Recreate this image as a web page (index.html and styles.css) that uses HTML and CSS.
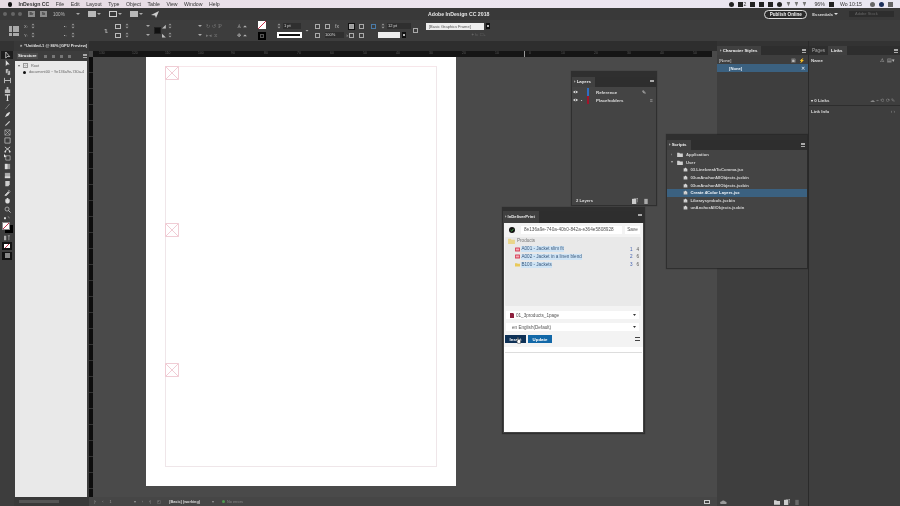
FILE: index.html
```html
<!DOCTYPE html>
<html lang="en">
<head>
<meta charset="utf-8">
<title>Adobe InDesign CC 2018</title>
<link rel="stylesheet" href="styles.css">
</head>
<body>
<svg class="defs" width="0" height="0" aria-hidden="true">
  <symbol id="eye" viewBox="0 0 8 6"><path d="M0 3Q4-1 8 3Q4 7 0 3Z" fill="#ddd"/><circle cx="4" cy="3" r="1.1" fill="#333"/></symbol>
  <symbol id="spin" viewBox="0 0 4 8"><path d="M0 3L2 .8L4 3ZM0 5L2 7.2L4 5Z" fill="#999"/></symbol>
  <symbol id="doc" viewBox="0 0 8 8"><path d="M1 2L3 2L4 0.6L7 3V7H1ZM3 5H5" fill="#ddd" stroke="#555" stroke-width=".4"/></symbol>
  <symbol id="folder" viewBox="0 0 8 7"><path d="M0 1H3L4 2H8V7H0Z" fill="#cfcfcf"/></symbol>
  <symbol id="trash" viewBox="0 0 6 7"><path d="M1 1H5V7H1Z" fill="#aaa"/></symbol>
  <symbol id="pageic" viewBox="0 0 7 7"><path d="M0 1H5V7H0Z" fill="#ccc"/><path d="M2 0H7V5" fill="none" stroke="#ddd" stroke-width=".8"/></symbol>
  <symbol id="prod" viewBox="0 0 6 5"><rect width="6" height="5" rx=".6" fill="#d8455c"/><path d="M1 1.3H5V3.6H1Z" fill="#f3a9b5"/></symbol>
  <symbol id="cloud" viewBox="0 0 8 5"><path d="M1 5A1.500 1.500 0 0 1 1.500 2A2.500 2.500 0 0 1 6 1.800A1.700 1.700 0 0 1 7 5Z" fill="#999"/></symbol>
</svg>
<div class="app">
  <div class="menubar">
    <span class="apple"></span>
    <b class="menu-app">InDesign CC</b>
    <span>File</span><span>Edit</span><span>Layout</span><span>Type</span><span>Object</span><span>Table</span><span>View</span><span>Window</span><span>Help</span>
    <div class="status">
      <i class="st r"></i><i class="st s"></i><em>2</em><i class="st s"></i><i class="st s"></i><i class="st s"></i><i class="st r"></i><i class="st t"></i><i class="st t"></i><i class="st t"></i>
      <span class="batt">96%</span><i class="st s"></i>
      <span class="clock">Wo 10:15</span><i class="st r lite"></i><i class="st r blue"></i><i class="st s lite"></i>
    </div>
  </div>

  <header class="appbar">
    <div class="lights"><i></i><i></i><i></i></div>
    <span class="tile">Br</span><span class="tile">St</span>
    <span class="zoomval">100%</span><span class="chev"></span>
    <span class="abicon"></span><span class="chev"></span>
    <span class="abicon open"></span><span class="chev"></span>
    <span class="abicon"></span><span class="chev"></span>
    <svg class="send" viewBox="0 0 8 7"><path d="M0 4L8 0L5 7L4 4.5Z" fill="#ccc"/></svg>
    <div class="apptitle">Adobe InDesign CC 2018</div>
    <button class="publish">Publish Online</button>
    <span class="essentials">Essentials</span><span class="chev light"></span>
    <div class="stock">Adobe Stock</div>
  </header>

  <div class="control">
    <div class="refgrid"><i></i><i></i><i></i><i></i><i></i><i></i><i></i><i></i><i></i></div>
    <div class="ccol w40"><div class="cf"><span class="lab">X:</span><svg class="sp"><use href="#spin"/></svg></div><div class="cf"><span class="lab">Y:</span><svg class="sp"><use href="#spin"/></svg></div></div>
    <div class="ccol w40"><div class="cf"><span class="lab">▪:</span><svg class="sp"><use href="#spin"/></svg></div><div class="cf"><span class="lab">▪:</span><svg class="sp"><use href="#spin"/></svg></div></div>
    <div class="ccol w10"><span class="gly">⇅</span></div>
    <div class="ccol w38"><div class="cf"><span class="box"></span><svg class="sp"><use href="#spin"/></svg><span class="chev push"></span></div><div class="cf"><span class="box"></span><svg class="sp"><use href="#spin"/></svg><span class="chev push"></span></div></div>
    <div class="ccol w7"><span class="blk"></span></div>
    <div class="ccol w43"><div class="cf"><span class="gly">◢</span><svg class="sp"><use href="#spin"/></svg><span class="chev push"></span></div><div class="cf"><span class="gly">◣</span><svg class="sp"><use href="#spin"/></svg><span class="chev push"></span></div></div>
    <div class="ccol w32 dim"><div class="cf"><span class="gly">↻</span><span class="gly">↺</span><span class="gly pp">P</span></div><div class="cf"><span class="gly">▸◂</span><span class="gly">⧖</span></div></div>
    <div class="ccol w26"><div class="cf"><span class="gly">♙</span><span class="gly">⏶</span></div><div class="cf"><span class="gly">✥</span><span class="gly">⏶</span></div></div>
    <div class="ccol w16"><span class="swatch none"></span><span class="swatch solid"></span></div>
    <div class="ccol w30">
      <div class="cf"><svg class="sp"><use href="#spin"/></svg><span class="ptfield">1 pt</span></div>
      <div class="cf"><span class="stroke"></span></div>
    </div>
    <div class="ccol w10"><span class="chev"></span></div>
    <div class="ccol w33"><div class="cf"><span class="sq"></span><span class="sq"></span><span class="gly">fx</span></div><div class="cf"><span class="sq"></span><span class="pct">100%</span><span class="gly">›</span></div></div>
    <div class="ccol w22"><div class="cf"><span class="sq on"></span><span class="sq"></span></div><div class="cf"><span class="sq"></span><span class="sq"></span></div></div>
    <div class="ccol w44"><div class="cf"><span class="sq blueish"></span><svg class="sp"><use href="#spin"/></svg><span class="ptfield wide">12 pt</span></div><div class="cf"><span class="whitef"></span><span class="chevbox"></span></div></div>
    <div class="ccol w12"><span class="sq"></span></div>
    <div class="ccol w66">
      <div class="cf"><span class="stylef">[Basic Graphics Frame]</span><span class="chevbox"></span></div>
      <div class="cf endrow"><span class="tiny">✦ fx</span><span class="tiny">☐+</span></div>
    </div>
  </div>

  <div class="work">
    <aside class="tools">
      <div class="toolhead"></div>
      <div class="tool sel"><svg viewBox="0 0 8 8"><path d="M2 0V7L3.6 5.2H6.5Z" fill="none" stroke="#eee" stroke-width=".8"/></svg></div>
      <div class="tool"><svg viewBox="0 0 8 8"><path d="M2 0V7L3.6 5.2H6.5Z" fill="#ddd"/></svg></div>
      <div class="tool"><svg viewBox="0 0 8 8"><path d="M2 1H5V6H2ZM4 3H7V8H4Z" fill="#ccc" stroke="#333" stroke-width=".4"/></svg></div>
      <div class="tool"><svg viewBox="0 0 8 8"><path d="M.5 1V7M7.5 1V7M1 4H7" stroke="#ccc" fill="none"/></svg></div>
      <div class="tool"><svg viewBox="0 0 8 8"><path d="M1 4H7V8H1ZM3 1H5V4H3Z" fill="#bbb"/></svg></div>
      <div class="tool"><svg viewBox="0 0 8 8"><path d="M1 1H7M4 1V8M2.5 8H5.5" stroke="#ddd" stroke-width="1.3" fill="none"/></svg></div>
      <div class="tool"><svg viewBox="0 0 8 8"><path d="M1.5 7L6.5 1" stroke="#aaa" stroke-width=".7"/></svg></div>
      <div class="tool"><svg viewBox="0 0 8 8"><path d="M1 7L3 3L6 1L7 2L5 5Z" fill="#ddd"/></svg></div>
      <div class="tool"><svg viewBox="0 0 8 8"><path d="M1 7L2 5L6 1L7 2L3 6Z" fill="#ccc"/></svg></div>
      <div class="tool"><svg viewBox="0 0 8 8"><path d="M1 1H7V7H1ZM1 1L7 7M7 1L1 7" fill="none" stroke="#ccc" stroke-width=".6"/></svg></div>
      <div class="tool"><svg viewBox="0 0 8 8"><path d="M1 1H7V7H1Z" fill="none" stroke="#ccc" stroke-width=".8"/></svg></div>
      <div class="tool"><svg viewBox="0 0 8 8"><path d="M1 1L7 6M7 1L1 6" stroke="#ddd"/><circle cx="1.5" cy="6.5" r="1" fill="#ddd"/><circle cx="6.5" cy="6.5" r="1" fill="#ddd"/></svg></div>
      <div class="tool"><svg viewBox="0 0 8 8"><path d="M2 2H7V7H2Z" fill="none" stroke="#ccc" stroke-width=".7"/><path d="M0 0V4L1 3H3Z" fill="#eee"/></svg></div>
      <div class="tool"><svg viewBox="0 0 8 8"><rect x="1" y="1" width="6" height="6" fill="#999"/><rect x="1" y="1" width="3" height="6" fill="#ddd"/></svg></div>
      <div class="tool"><svg viewBox="0 0 8 8"><rect x="1" y="1" width="6" height="6" fill="#aaa"/><rect x="1" y="5" width="6" height="2" fill="#ddd"/></svg></div>
      <div class="tool"><svg viewBox="0 0 8 8"><path d="M1.5 1H6.5V5L5 7H1.5Z" fill="#ccc"/></svg></div>
      <div class="tool"><svg viewBox="0 0 8 8"><path d="M1 7L5 3L6 4L2 8ZM5 1L7 3" stroke="#ccc" fill="#ccc"/></svg></div>
      <div class="tool"><svg viewBox="0 0 8 8"><path d="M1.5 4V2.5H3V1H5V2.5H6.5V6L5 7.5H3L1.5 6Z" fill="#ddd"/></svg></div>
      <div class="tool"><svg viewBox="0 0 8 8"><circle cx="3.5" cy="3.5" r="2.3" fill="none" stroke="#ccc" stroke-width=".8"/><path d="M5 5L7.5 7.5" stroke="#ccc"/></svg></div>
      <div class="tool mini"><svg viewBox="0 0 8 8"><rect x="0" y="3" width="2.6" height="2.6" fill="#ddd"/><path d="M5 2Q7 2 7 4.500" stroke="#aaa" fill="none" stroke-width=".7"/></svg></div>
      <div class="fillstroke"><span class="fillbox"></span><span class="strokebox"></span></div>
      <div class="tool mini"><svg viewBox="0 0 8 8"><rect x="0" y="1" width="3" height="6" fill="#aaa"/><path d="M5 1H8M6.500 1V7" stroke="#aaa"/></svg></div>
      <div class="applybox"><span></span></div>
      <div class="viewbox"><span></span></div>
    </aside>

    <section class="structure">
      <div class="doctab"><span class="x">×</span>*Untitled-1 @ 86% [GPU Preview]</div>
      <div class="panelhead light"><b class="paneltab plain">Structure</b><span class="hd-icons"><i></i><i></i><i></i><i></i></span><span class="hamb"></span></div>
      <div class="struct-body">
        <div class="root"><span class="tw">▾</span><span class="rootbox">‹›</span><span>Root</span></div>
        <div class="docnode"><span class="dot"></span>document00 ~ 9e136a9e-740a-4</div>
      </div>
      <div class="hscroll"><span></span></div>
    </section>

    <main class="canvas">
      <div class="tabstrip"></div>
      <div class="hruler">
        <span>130</span><span>120</span><span>110</span><span>100</span><span>90</span><span>80</span><span>70</span><span>60</span><span>50</span><span>40</span><span>30</span><span>20</span><span>10</span><span class="tk">0</span><span>10</span><span>20</span><span>30</span><span>40</span><span>50</span>
      </div>
      <div class="pasteboard">
        <div class="vruler"></div>
        <div class="spread">
          <div class="page">
            <div class="margins">
              <svg class="ph" viewBox="0 0 14 14"><path d="M.5.5H13.500V13.500H.5ZM.5.5L13.500 13.500M13.500.5L.5 13.500"/></svg>
              <svg class="ph ph2" viewBox="0 0 14 14"><path d="M.5.5H13.500V13.500H.5ZM.5.5L13.500 13.500M13.500.5L.5 13.500"/></svg>
              <svg class="ph ph3" viewBox="0 0 14 14"><path d="M.5.5H13.500V13.500H.5ZM.5.5L13.500 13.500M13.500.5L.5 13.500"/></svg>
            </div>
          </div>
        </div>
      </div>
      <div class="statusbar">
        <span class="nav">|‹</span><span class="nav">‹</span><span class="nav">1</span><span class="nav sp1">▾</span><span class="nav">›</span><span class="nav">›|</span><span class="nav">◰</span>
        <b class="basic">[Basic] (working)</b><span class="nav">▾</span><span class="okdot"></span><span class="noerr">No errors</span>
        <span class="book"></span>
      </div>
    </main>

    <aside class="dock">
      <div class="dockcol charcol">
        <div class="dockstrip"></div>
        <div class="panelhead"><b class="paneltab">› Character Styles</b><span class="hamb"></span></div>
        <div class="dockbody">
          <div class="cs-row"><span>[None]</span><span class="cs-ic">▣&nbsp;&nbsp;⚡</span></div>
          <div class="cs-row selrow"><b class="ind">[None]</b><span class="cs-x">✕</span></div>
        </div>
        <div class="dockfoot"><svg class="cloud"><use href="#cloud"/></svg><span class="foot-gap"></span><svg class="fi"><use href="#folder"/></svg><svg class="fi"><use href="#pageic"/></svg><svg class="fi dimfi"><use href="#trash"/></svg></div>
      </div>
      <div class="dockcol linkcol">
        <div class="dockstrip"></div>
        <div class="panelhead"><span class="inactive">Pages</span><b class="paneltab">Links</b><span class="hamb"></span></div>
        <div class="dockbody">
          <div class="lk-row"><b>Name</b><span class="cs-ic">⚠&nbsp;&nbsp;▤▾</span></div>
          <div class="lk-empty"></div>
          <div class="lk-row lined"><b>▾ 0 Links</b><span class="cs-ic dimmed">☁ ⌁ ⟲ ⟳ ✎</span></div>
          <div class="lk-row"><b>Link Info</b><span class="cs-ic dimmed">‹ ›</span></div>
        </div>
      </div>
    </aside>

    <div class="float layers">
      <div class="fstrip"></div>
      <div class="panelhead"><b class="paneltab">› Layers</b><span class="hamb"></span></div>
      <div class="fbody">
        <div class="layer"><svg class="eye"><use href="#eye"/></svg><span class="lk"></span><span class="cbar bl"></span><b>Reference</b><span class="pen">✎</span></div>
        <div class="layer"><svg class="eye"><use href="#eye"/></svg><span class="lk">▪</span><span class="cbar rd"></span><b>Placeholders</b><span class="pen nm">≡</span></div>
      </div>
      <div class="ffoot"><b>2 Layers</b><span class="foot-gap"></span><svg class="fi"><use href="#pageic"/></svg><svg class="fi"><use href="#trash"/></svg></div>
    </div>

    <div class="float scripts">
      <div class="fstrip"></div>
      <div class="panelhead"><b class="paneltab">› Scripts</b><span class="hamb"></span></div>
      <div class="fbody">
        <div class="sc lvl0"><span class="tw">›</span><svg class="fold"><use href="#folder"/></svg>Application</div>
        <div class="sc lvl0"><span class="tw">▾</span><svg class="fold"><use href="#folder"/></svg>User</div>
        <div class="sc lvl1"><svg class="fold"><use href="#doc"/></svg>03.LinebreakToComma.jsx</div>
        <div class="sc lvl1"><svg class="fold"><use href="#doc"/></svg>03unAnchorAllObjects.jsxbin</div>
        <div class="sc lvl1"><svg class="fold"><use href="#doc"/></svg>03unAnchorAllObjects.jsxbin</div>
        <div class="sc lvl1 on"><svg class="fold"><use href="#doc"/></svg>Create 4Color Layers.jsx</div>
        <div class="sc lvl1"><svg class="fold"><use href="#doc"/></svg>Librarysymbols.jsxbin</div>
        <div class="sc lvl1"><svg class="fold"><use href="#doc"/></svg>unAnchorAllObjects.jsxbin</div>
      </div>
    </div>

    <div class="float idp">
      <div class="fstrip"></div>
      <div class="panelhead"><b class="paneltab">› InDeliverPrint</b><span class="hamb"></span></div>
      <div class="idp-body">
        <div class="idp-form">
          <div class="idrow">
            <svg class="okic" viewBox="0 0 7 7"><circle cx="3.500" cy="3.500" r="3.500" fill="#111"/><path d="M1.800 3.600L3.100 4.900L5.300 2.200" stroke="#4caf50" fill="none"/></svg>
            <span class="idfield">8e136a9e-740a-40b0-842a-e364e5808928</span>
            <span class="save">Save</span>
          </div>
          <div class="tree">
            <div class="node top"><svg class="yf" viewBox="0 0 8 7"><path d="M0 1H3L4 2H8V7H0Z" fill="#e9d58b"/></svg>Products</div>
            <div class="node"><svg class="pr"><use href="#prod"/></svg><span class="hl">A001 - Jacket slim fit</span><span class="nums"><i>1</i><i>4</i></span></div>
            <div class="node"><svg class="pr"><use href="#prod"/></svg><span class="hl">A002 - Jacket in a linen blend</span><span class="nums"><i>2</i><i>6</i></span></div>
            <div class="node"><svg class="pr" viewBox="0 0 6 5"><path d="M0 1H2.500L3.200 1.700H6V5H0Z" fill="#e9c95a"/></svg><span class="hl">B100 - Jackets</span><span class="nums"><i>3</i><i>6</i></span></div>
          </div>
          <div class="select first"><svg class="pdf" viewBox="0 0 5 6"><path d="M0 0H4L5 1V6H0Z" fill="#8d1f3d"/></svg>01_3products_1page<span class="tri"></span></div>
          <div class="select">en English(Default)<span class="tri"></span></div>
          <div class="btnrow">
            <button class="btn insert">Insert</button>
            <button class="btn update">Update</button>
            <span class="burger"></span>
          </div>
        </div>
        <div class="blankfield"></div>
      </div>
      <svg class="cursor" viewBox="0 0 6 8"><path d="M1.800 .5V4.500L.5 3.800L2 7.500H5.500V3.200L2.800 2.800V.5Z" fill="#fff" stroke="#222" stroke-width=".5"/></svg>
    </div>
  </div>
</div>
</body>
</html>
```

FILE: styles.css
```css
* { box-sizing: border-box; }
html, body { margin: 0; height: 100%; background: #3c3c3c; overflow: hidden; }
body { font-family: "Liberation Sans", Arial, sans-serif; font-size: 5px; color: #ddd; }
.defs { position: absolute; }
button { font: inherit; padding: 0; border: 0; }
i, em { font-style: normal; }

.app { width: 900px; height: 506px; display: flex; flex-direction: column; filter: blur(.45px); }

/* macOS menu bar */
.menubar { height: 8px; flex: none; display: flex; align-items: center; gap: 6.500px; padding-left: 8px; background: linear-gradient(90deg, #e6dbe2, #ece4ee 50%, #e9e7f2); color: #333; font-size: 5.200px; white-space: nowrap; }
.apple { width: 4px; height: 5px; border-radius: 2px; background: #111; margin-right: 0; }
.status { margin-left: auto; display: flex; align-items: center; gap: 4px; padding-right: 7px; }
.st { display: block; width: 5px; height: 5px; background: #222; }
.st.r { border-radius: 50%; }
.st.t { width: 4px; background: #777; clip-path: polygon(0 0, 100% 0, 50% 100%); }
.st.lite { background: #666; }
.st.blue { background: #1c2f5a; }
.batt { margin-left: 4px; }
.clock { margin-left: 2px; margin-right: 4px; }
.status em { margin-left: -3px; }

/* application bar */
.appbar { height: 12px; flex: none; display: flex; align-items: center; background: #393939; position: relative; color: #ddd; padding-left: 3px; }
.lights { display: flex; gap: 3.500px; margin-right: 6px; }
.lights i { width: 4px; height: 4px; border-radius: 50%; background: #666; }
.tile { width: 7px; height: 6px; margin-right: 5px; background: #8c8c8c; color: #333; font-size: 3.500px; line-height: 6px; text-align: center; font-weight: bold; }
.zoomval { width: 22px; margin-left: 1px; color: #bbb; font-size: 4.600px; }
.chev { display: inline-block; width: 4px; height: 2px; flex: none; background: #aaa; clip-path: polygon(0 0, 100% 0, 50% 100%); margin: 0 4px 0 1px; }
.chev.light { background: #ddd; }
.abicon { width: 8px; height: 6px; margin-left: 4px; background: #b8b8b8; }
.abicon.open { background: transparent; border: 1px solid #ccc; }
.send { width: 8px; height: 7px; margin-left: 4px; }
.apptitle { position: absolute; left: 428px; top: 2.500px; font-size: 5.200px; font-weight: bold; color: #e6e6e6; }
.publish { margin-left: auto; width: 43px; height: 9px; border: 1px solid #ddd; border-radius: 5px; background: #2c2c2c; color: #eee; font-size: 4.600px; font-weight: bold; line-height: 7px; }
.essentials { margin-left: 5px; font-size: 4.200px; font-weight: bold; }
.stock { width: 45px; height: 6px; margin: 0 6px 0 7px; padding-left: 6px; background: #2d2d2d; color: #666; font-size: 4px; line-height: 6px; }

/* control panel */
.control { height: 21px; flex: none; display: flex; align-items: center; gap: 1px; padding-left: 9px; background: #3d3d3d; }
.refgrid { width: 11px; height: 10px; display: grid; grid-template-columns: repeat(3, 3px); grid-auto-rows: 3px; gap: .5px; margin-right: 3px; }
.refgrid i { background: #aaa; }
.ccol { display: flex; flex-direction: column; gap: 3px; flex: none; align-items: stretch; justify-content: center; }
.ccol.dim { opacity: .45; }
.w7 { width: 7px; } .w10 { width: 10px; } .w12 { width: 12px; } .w16 { width: 18px; } .w22 { width: 21px; } .w26 { width: 20px; }
.w30 { width: 26px; } .w32 { width: 30px; } .w33 { width: 33px; } .w38 { width: 38px; } .w40 { width: 39px; } .w43 { width: 43px; } .w44 { width: 41px; } .w66 { width: 64px; }
.cf { height: 6px; display: flex; align-items: center; gap: 2px; }
.lab { color: #bbb; font-size: 4px; width: 5px; }
.sp { width: 4px; height: 6px; flex: none; }
.box { width: 6px; height: 5px; border: 1px solid #bbb; margin-right: 2px; }
.push { margin-left: auto; margin-right: 3px; }
.gly { color: #bbb; font-size: 5px; line-height: 6px; white-space: nowrap; }
.pp { font-family: "Liberation Serif", serif; font-size: 7px; }
.blk { display: block; width: 7px; height: 7px; background: #111; border: 1px solid #222; position: relative; }
.swatch { display: block; width: 8px; height: 8px; }
.swatch.none { background: linear-gradient(135deg, #fff 45%, #c5304a 45%, #c5304a 55%, #fff 55%); }
.swatch.solid { background: #111; border: 2px solid #000; box-shadow: inset 0 0 0 1px #555; }
.ptfield { height: 6px; width: 18px; padding-left: 1px; background: #2f2f2f; color: #ddd; font-size: 4px; line-height: 6px; }
.ptfield.wide { width: 24px; }
.stroke { display: block; width: 25px; height: 6px; background: #fff; position: relative; }
.stroke::after { content: ""; position: absolute; left: 2px; right: 2px; top: 2px; height: 2px; background: #111; }
.sq { display: block; width: 5px; height: 5px; border: 1px solid #aaa; flex: none; margin-right: 3px; }
.sq.on { background: #999; box-shadow: 0 0 0 1px #111; }
.sq.blueish { border-color: #4a7ba8; }
.pct { width: 20px; font-size: 4px; color: #ddd; background: #2f2f2f; line-height: 6px; }
.whitef { width: 22px; height: 6px; background: #eee; margin-left: 7px; }
.chevbox { width: 4px; height: 6px; background: #111; position: relative; }
.chevbox::after { content: ""; position: absolute; left: 1px; top: 2px; width: 2px; height: 1.500px; background: #bbb; }
.stylef { width: 58px; height: 7px; padding-left: 3px; background: #eee; color: #555; font-size: 4px; line-height: 7px; }
.endrow { justify-content: flex-start; padding-left: 45px; }
.tiny { font-size: 3.500px; color: #666; white-space: nowrap; }

/* workspace */
.work { flex: 1; min-height: 0; display: flex; position: relative; }
.tools { width: 14px; flex: none; display: flex; flex-direction: column; align-items: center; background: #3d3d3d; }
.toolhead { height: 10px; width: 100%; background: #333; flex: none; }
.tool { width: 12px; height: 8.600px; flex: none; display: flex; align-items: center; justify-content: center; }
.tool.sel { height: 8px; background: #1d1d1d; }
.tool svg { width: 7px; height: 7px; }
.tool.mini svg { width: 6px; height: 6px; }
.fillstroke { width: 11px; height: 11px; flex: none; position: relative; }
.fillbox { position: absolute; left: 0; top: 0; width: 8px; height: 8px; z-index: 1; background: linear-gradient(135deg, #fff 44%, #c5304a 44%, #c5304a 56%, #fff 56%); border: 1px solid #888; }
.strokebox { position: absolute; right: 0; bottom: 0; width: 8px; height: 8px; background: #000; }
.applybox { width: 10px; height: 8px; background: #111; display: flex; align-items: center; justify-content: center; }
.applybox span { width: 6px; height: 4px; background: linear-gradient(135deg, #fff 44%, #c5304a 44%, #c5304a 56%, #fff 56%); }
.viewbox { width: 10px; height: 8px; margin-top: 2px; background: #111; display: flex; align-items: center; justify-content: center; }
.viewbox span { width: 5px; height: 5px; background: #888; }

.structure { width: 75px; flex: none; display: flex; flex-direction: column; background: #3d3d3d; }
.doctab { height: 10px; flex: none; padding-left: 6px; background: #383838; color: #e0e0e0; font-size: 4px; font-weight: bold; line-height: 10px; white-space: nowrap; overflow: hidden; }
.doctab .x { margin-right: 2px; }
.struct-body { flex: 1; margin: 0 2px 0 1px; background: #e9e9e9; color: #666; font-size: 3.800px; overflow: hidden; }
.root { display: flex; align-items: center; gap: 3px; padding: 1px 0 0 3px; height: 8px; }
.rootbox { width: 5px; height: 5px; border: .5px solid #999; font-size: 3px; line-height: 4px; text-align: center; }
.tw { font-size: 3.500px; }
.docnode { display: flex; align-items: center; gap: 3px; padding-left: 8px; height: 6px; white-space: nowrap; }
.dot { width: 3px; height: 3px; border-radius: 50%; background: #111; flex: none; }
.hscroll { height: 9px; flex: none; padding: 3px 30px 3px 5px; background: #393939; }
.hscroll span { display: block; height: 3px; background: #555; }

/* panels */
.panelhead { height: 10px; flex: none; display: flex; align-items: stretch; background: #2e2e2e; position: relative; }
.panelhead.light { background: #3d3d3d; align-items: center; padding-left: 3px; }
.paneltab { padding: 0 4px 0 2px; background: #404040; color: #eee; font-size: 4.400px; line-height: 10px; white-space: nowrap; }
.paneltab.plain { padding: 0 1px; background: #4a4a4a; line-height: 6px; font-size: 4.200px; }
.hd-icons { display: flex; gap: 5px; margin-left: 6px; }
.hd-icons i { width: 3px; height: 3px; background: #777; }
.hamb { position: absolute; right: 2px; top: 3px; width: 4px; height: 4px; background: repeating-linear-gradient(#aaa 0 .7px, transparent .7px 1.400px); }
.inactive { padding: 0 3px; color: #a8a8a8; font-size: 4.600px; line-height: 10px; }

/* canvas */
.canvas { flex: 1; min-width: 0; display: flex; flex-direction: column; background: #4a4a4a; }
.tabstrip { height: 10px; flex: none; background: #2e2e2e; }
.hruler { height: 6px; flex: none; display: flex; margin-left: 4px; margin-right: 5px; padding-left: 2px; background: #151515; color: #5a5a5a; font-size: 3.400px; line-height: 5px; overflow: hidden; }
.hruler span { width: 33px; flex: none; padding-left: 4px; }
.hruler .tk { border-left: 1px solid #999; }
.pasteboard { flex: 1; min-height: 0; display: flex; }
.vruler { width: 4px; flex: none; background: #0d0d0d; background-image: repeating-linear-gradient(#0d0d0d 0 15px, #333 15px 16px); }
.spread { flex: 1; padding: 0 0 11px 53px; display: flex; align-items: stretch; }
.page { width: 310px; height: 429px; background: #fff; padding: 9px 19px 19px; }
.margins { height: 100%; border: 1px solid #efe6e9; border-top-color: #f7e6ea; display: flex; flex-direction: column; }
.ph { width: 14px; height: 14px; display: block; margin: -1px 0 0 -1px; flex: none; }
.ph2 { margin-top: 143px; }
.ph3 { margin-top: 126px; }
.ph path { fill: none; stroke: #f0cdd5; stroke-width: 1; }
.statusbar { height: 9px; flex: none; display: flex; align-items: center; gap: 6px; padding-left: 5px; background: #464646; color: #999; font-size: 3.800px; white-space: nowrap; }
.sp1 { margin-left: 16px; }
.basic { margin-left: 2px; margin-right: 6px; color: #ddd; font-size: 3.800px; }
.okdot { width: 3px; height: 3px; border-radius: 50%; background: #4f9a4f; margin-left: 2px; margin-right: -4px; }
.noerr { color: #888; }
.book { width: 6px; height: 4px; margin-left: auto; margin-right: 7px; border: .7px solid #ccc; }

/* docks */
.dock { width: 183px; flex: none; display: flex; background: #2a2a2a; gap: 1px; }
.dockcol { flex: 1; display: flex; flex-direction: column; background: #3e3e3e; }
.dockstrip { height: 5px; flex: none; background: #333; }
.dockcol .panelhead { height: 9px; }
.dockcol .paneltab { line-height: 9px; padding-left: 3px; }
.dockbody { flex: 1; font-size: 4.200px; color: #ddd; }
.cs-row { height: 8px; display: flex; align-items: center; justify-content: space-between; padding: 0 3px 0 2px; }
.cs-row:first-child { margin-top: 1px; }
.selrow { background: #3b6180; color: #eaf2f8; }
.ind { padding-left: 10px; }
.cs-ic { color: #bbb; font-size: 4.600px; }
.cs-x { font-size: 4.500px; }
.dockfoot { height: 9px; flex: none; display: flex; align-items: center; gap: 4px; padding: 0 8px 0 3px; }
.foot-gap { margin-left: auto; }
.cloud { width: 7px; height: 4px; }
.fi { width: 6px; height: 6px; flex: none; }
.dimfi { opacity: .4; }
.lk-row { height: 10px; display: flex; align-items: center; justify-content: space-between; padding: 0 5px 0 2px; font-size: 4.400px; }
.lk-empty { height: 30px; }
.lk-row.lined { border-bottom: 1px solid #2d2d2d; height: 11px; }
.dimmed { color: #888; }

/* floating windows on the pasteboard */
.float { position: absolute; display: flex; flex-direction: column; background: #444; box-shadow: 0 0 1px 1px rgba(30,30,30,.6); }
.fstrip { height: 5px; flex: none; background: #2f2f2f; }
.layers { left: 572px; top: 31px; width: 84px; height: 133px; }
.scripts { left: 667px; top: 94px; width: 140px; height: 133px; }
.fbody { flex: 1; padding-top: 1px; font-size: 4.400px; color: #ddd; }
.layer { height: 8px; display: flex; align-items: center; position: relative; padding-left: 1px; }
.eye { width: 5px; height: 4px; margin-right: 3px; flex: none; }
.lk { width: 4px; font-size: 4px; color: #ccc; }
.cbar { width: 2px; height: 8px; margin: 0 7px 0 2px; }
.cbar.bl { background: #2f6fc2; }
.cbar.rd { background: #a3122a; }
.pen { position: absolute; right: 10px; font-size: 5px; color: #ddd; }
.pen.nm { right: 3px; color: #aaa; }
.ffoot { height: 9px; flex: none; display: flex; align-items: center; gap: 5px; padding: 0 7px 0 4px; font-size: 4.200px; color: #ddd; }

.sc { height: 7.600px; display: flex; align-items: center; white-space: nowrap; font-weight: bold; color: #d5d5d5; font-size: 4.200px; }
.sc.lvl0 { padding-left: 4px; }
.sc.lvl1 { padding-left: 16px; }
.sc.on { background: #3b6180; color: #f0f6fa; }
.sc .tw { width: 3px; margin-right: 3px; color: #aaa; }
.fold { width: 5px; height: 5px; margin-right: 2.500px; flex: none; }
.sc.lvl0 .fold { width: 6px; margin-right: 3px; }

.idp { left: 503px; top: 167px; width: 141px; height: 225px; }
.idp .panelhead { height: 12px; }
.idp .paneltab { line-height: 12px; font-size: 4.200px; }
.idp .fstrip { height: 3px; }
.idp-body { flex: 1; margin: 0 1px 1px; background: #fff; color: #555; font-size: 4.600px; }
.idp-form { background: #f3f3f3; padding-bottom: 4px; }
.idrow { height: 14px; display: flex; align-items: center; padding: 0 2px 0 5px; }
.okic { width: 6px; height: 6px; margin-right: 6px; flex: none; }
.idfield { width: 101px; height: 8px; padding-left: 3px; background: #fff; font-size: 4.700px; line-height: 8px; white-space: nowrap; overflow: hidden; }
.save { margin-left: 3px; width: 15px; height: 8px; background: #fff; line-height: 8px; text-align: center; }
.tree { height: 69px; margin: 0 2px 0 1px; padding-left: 2px; background: #e9e9e9; border-radius: 1px; }
.node { height: 7.600px; display: flex; align-items: center; padding-left: 8px; position: relative; color: #555; }
.node.top { padding-left: 1px; margin-bottom: 1px; color: #777; }
.yf { width: 7px; height: 6px; margin-right: 2px; }
.pr { width: 5px; height: 5px; margin-right: 1px; flex: none; }
.hl { padding: 0 .5px; background: #cfe4f5; color: #39597d; line-height: 6px; white-space: nowrap; }
.nums { position: absolute; right: 2px; display: flex; gap: 4px; }
.nums i:first-child { color: #3f5fb0; }
.select { height: 8px; margin: 4px 4px 4px 2px; padding-left: 6px; display: flex; align-items: center; background: #fff; position: relative; white-space: nowrap; }
.select.first { margin-top: 5px; padding-left: 4px; }
.pdf { width: 4px; height: 5px; margin-right: 2px; }
.tri { position: absolute; right: 3px; top: 3px; width: 3px; height: 2px; background: #333; clip-path: polygon(0 0, 100% 0, 50% 100%); }
.btnrow { height: 8px; display: flex; align-items: center; gap: 2px; padding: 0 3px 0 1px; margin-top: 4px; }
.btn { height: 8px; color: #fff; font-size: 4.400px; font-weight: bold; }
.insert { width: 21px; background: #0e3156; }
.update { width: 24px; background: #1268a8; }
.burger { margin-left: auto; width: 5px; height: 5px; background: repeating-linear-gradient(#444 0 .8px, transparent .8px 1.600px); }
.blankfield { height: 6px; margin: 0 1px; border-bottom: .5px solid #ddd; }
.cursor { position: absolute; left: 13px; top: 129px; width: 5px; height: 7px; }
```
